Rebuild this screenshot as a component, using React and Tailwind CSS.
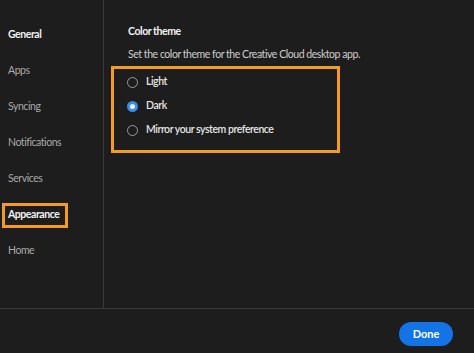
import React, { useState } from "react";

const navItems = ["General", "Apps", "Syncing", "Notifications", "Services", "Appearance", "Home"];
const themes = ["Light", "Dark", "Mirror your system preference"];

const Radio = ({ checked }) =>
  checked ? (
    <span className="w-[11px] h-[11px] rounded-full border-[3px] border-[#378ef0] bg-[#f2f2f2] shrink-0" />
  ) : (
    <span className="w-[11px] h-[11px] rounded-full border-[1.5px] border-[#9a9a9a] shrink-0" />
  );

export default function App() {
  const [theme, setTheme] = useState("Dark");

  return (
    <div
      className="w-[474px] h-[353px] bg-[#1d1d1d] flex flex-col overflow-hidden text-[10.5px] tracking-[-0.45px]"
      style={{ fontFamily: "Lato, 'Open Sans', sans-serif" }}
    >
      <div className="flex h-[309px] border-b border-[#3a3a3a]">
        {/* Sidebar */}
        <div className="w-[104px] border-r border-[#3a3a3a] pt-[17px] flex flex-col">
          {navItems.map((item) => (
            <div key={item} className="h-[36px] flex items-center">
              {item === "Appearance" ? (
                <span className="ml-[2px] h-[25px] flex items-center border-[3px] border-[#f29b25] pl-[3px] pr-[6px] text-[#f2f2f2] font-bold">
                  {item}
                </span>
              ) : (
                <span
                  className={
                    item === "General"
                      ? "pl-2 text-[#f0f0f0] font-bold"
                      : "pl-2 text-[#a9a9a9]"
                  }
                >
                  {item}
                </span>
              )}
            </div>
          ))}
        </div>

        {/* Content */}
        <div className="flex-1 pl-[7px] pt-[24px]">
          <div className="pl-[17px] text-[#f2f2f2] font-bold leading-[14px]">Color theme</div>
          <div className="pl-[17px] mt-[9px] text-[#cdcdcd] leading-[14px]">
            Set the color theme for the Creative Cloud desktop app.
          </div>
          <div className="mt-[5px] w-[229px] border-[3px] border-[#f29b25] pt-[1px] pb-[8px] pl-[13px]">
            {themes.map((t) => (
              <div
                key={t}
                className="h-[24px] flex items-center gap-[8px] cursor-pointer"
                onClick={() => setTheme(t)}
              >
                <Radio checked={theme === t} />
                <span className="text-[#e6e6e6] font-semibold">{t}</span>
              </div>
            ))}
          </div>
        </div>
      </div>

      {/* Footer */}
      <div className="flex-1 flex justify-end items-start pt-[13px] pr-[21px]">
        <button className="w-[54px] h-[24px] rounded-full bg-[#1473e6] text-white font-bold text-[11px] tracking-normal">
          Done
        </button>
      </div>
    </div>
  );
}
